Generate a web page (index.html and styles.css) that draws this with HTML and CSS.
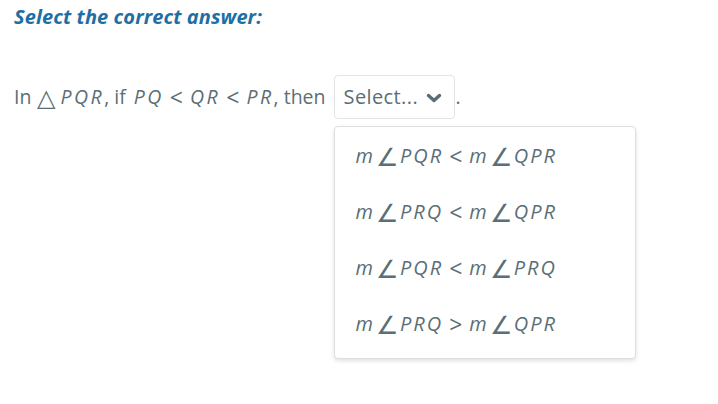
FILE: index.html
```html
<!DOCTYPE html>
<html>
<head>
<meta charset="utf-8">
<link rel="stylesheet" href="styles.css">
</head>
<body>
<div class="page">
  <h1 class="title">Select the correct answer:</h1>
  <div class="question">
    <span>In</span><span class="tri">△</span><i class="mi">PQR</i><span>, if</span><i class="mi sp">PQ</i><span class="rel">&lt;</span><i class="mi">QR</i><span class="rel">&lt;</span><i class="mi">PR</i><span>, then</span>
    <div class="selwrap">
      <div class="select">
        <span class="seltext">Select...</span>
        <svg class="chev" width="16" height="12" viewBox="0 0 16 12"><path d="M2.5 3.5 L8 8.5 L13.5 3.5" fill="none" stroke="#5b6e75" stroke-width="3.4" stroke-linecap="round" stroke-linejoin="round"/></svg>
      </div>
      <div class="menu">
        <div class="opt"><i>m</i><span class="ang">∠</span><i>PQR</i><span class="rel">&lt;</span><i>m</i><span class="ang">∠</span><i>QPR</i></div>
        <div class="opt"><i>m</i><span class="ang">∠</span><i>PRQ</i><span class="rel">&lt;</span><i>m</i><span class="ang">∠</span><i>QPR</i></div>
        <div class="opt"><i>m</i><span class="ang">∠</span><i>PQR</i><span class="rel">&lt;</span><i>m</i><span class="ang">∠</span><i>PRQ</i></div>
        <div class="opt"><i>m</i><span class="ang">∠</span><i>PRQ</i><span class="rel">&gt;</span><i>m</i><span class="ang">∠</span><i>QPR</i></div>
      </div>
    </div>
    <span class="dot">.</span>
  </div>
</div>
</body>
</html>
```

FILE: styles.css
```css
html, body {
  margin: 0;
  padding: 0;
  height: 100%;
  background: #ffffff;
}
.page {
  min-height: 100%;
  box-sizing: border-box;
  padding: 3px 14px;
  font-family: "Open Sans", Roboto, sans-serif;
  color: #5b6e75;
}
.title {
  margin: 0;
  font-size: 20px;
  line-height: 28px;
  font-weight: 700;
  font-style: italic;
  color: #1d6fa5;
  letter-spacing: 0.1px;
}
.question {
  margin-top: 44px;
  display: flex;
  align-items: center;
  font-size: 19.5px;
  line-height: 24px;
  white-space: nowrap;
}
.mi {
  font-style: italic;
  letter-spacing: 2.5px;
}
.mi.sp {
  margin-left: 8px;
}
.rel {
  margin: 0 7px 0 6px;
  font-style: normal;
  font-size: 23px;
}
.tri {
  font-size: 24px;
  margin: 0 5px 0 6px;
}
.selwrap {
  position: relative;
  margin-left: 8px;
}
.select {
  display: flex;
  align-items: center;
  gap: 8px;
  box-sizing: border-box;
  width: 121px;
  height: 44px;
  padding: 0 9px;
  border: 1px solid #e2e4e6;
  border-radius: 4px;
  background: #fff;
  font-size: 20px;
  letter-spacing: 0.4px;
}
.chev {
  margin-top: 2px;
}
.dot {
  margin-left: 1px;
}
.menu {
  position: absolute;
  left: 0;
  top: 51px;
  width: 302px;
  height: 233px;
  box-sizing: border-box;
  padding: 1px 0 0 21px;
  border: 1px solid #dcdfe1;
  border-radius: 4px;
  background: #fff;
  box-shadow: 0 2px 4px rgba(0,0,0,0.12);
}
.opt {
  display: flex;
  align-items: center;
  height: 56px;
  font-size: 20px;
}
.opt i {
  font-style: italic;
  letter-spacing: 2px;
}
.opt .rel {
  margin: 0 7px 0 6px;
}
.ang {
  font-size: 25px;
  margin: 0 2px 0 1px;
}
```
